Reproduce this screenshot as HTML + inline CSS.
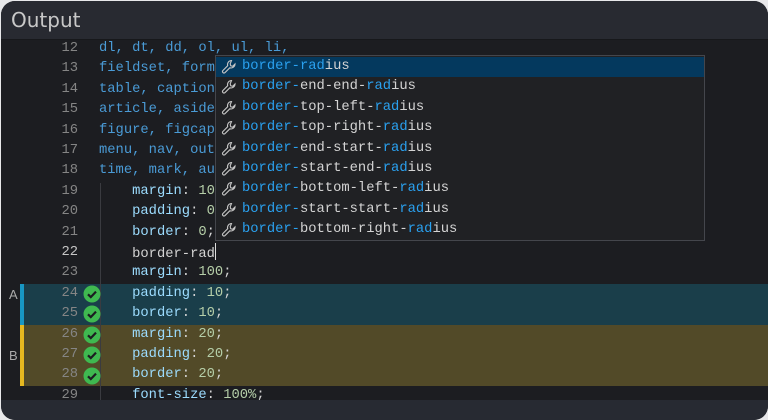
<!DOCTYPE html>
<html><head><style>
body{margin:0;background:#e8e8ea;width:768px;height:420px;overflow:hidden}
.frame{position:absolute;left:1px;top:1px;width:767px;height:419px;background:#1c1d21;border-radius:14px 14px 14px 14px;overflow:hidden}
.title{position:absolute;left:0;top:0;right:0;height:39px;background:#282a31;border-bottom:1px solid #17181b;color:#c8c8c8;font:20px "DejaVu Sans","Liberation Sans",sans-serif;line-height:38px;padding-left:10px;box-sizing:border-box}
.bottom{position:absolute;left:0;right:0;top:399px;height:21px;background:#272a32}
.line{position:absolute;left:0;right:0;height:20.4px;font:13.8px "Liberation Mono",monospace;line-height:20.4px;white-space:pre}
.num{position:absolute;right:690px;color:#858585;text-align:right}
.code{position:absolute;left:98px;color:#9cdcfe}
.sel{color:#4a9bd6}
.n{color:#b5cea8}
.p{color:#d4d4d4}
.guide{position:absolute;left:99px;top:182px;width:1px;height:220px;background:#3a3b40}
.hlA{position:absolute;left:19px;right:0;top:283px;height:41px;background:#1a3e4a;border-left:4px solid #1897c4}
.hlB{position:absolute;left:19px;right:0;top:324px;height:61px;background:#524a28;border-left:4px solid #e6b820}
.lab{position:absolute;left:8px;color:#aaa;font:13px "Liberation Sans",sans-serif}
.chk{position:absolute;left:82px;width:18px;height:18px}
.sug{position:absolute;left:214px;top:54px;width:490px;height:186px;background:#202124;border:1px solid #44464c;box-sizing:border-box}
.row{position:absolute;left:0;right:0;height:20.4px;font:13.8px "Liberation Mono",monospace;line-height:20.4px;color:#d4d4d4;white-space:pre}
.row .t{position:absolute;left:26px}
.row svg{position:absolute;left:5px;top:2px}
.b{color:#2aa1f0}
.cur{display:inline-block;width:1px;height:17px;background:#ddd;vertical-align:-3px}
</style></head><body>
<div class="frame">
<div class="title">Output</div>
<div class="hlA"></div><div class="hlB"></div>
<div class="guide"></div>
<div class="lab" style="top:286px">A</div>
<div class="lab" style="top:347px">B</div>
<div class="line" style="top:38px"><span class="num">12</span><span class="code sel">dl, dt, dd, ol, ul, li,</span></div>
<div class="line" style="top:58.4px"><span class="num">13</span><span class="code sel">fieldset, form, label, legend,</span></div>
<div class="line" style="top:78.8px"><span class="num">14</span><span class="code sel">table, caption, tbody, tfoot,</span></div>
<div class="line" style="top:99.2px"><span class="num">15</span><span class="code sel">article, aside, canvas, details,</span></div>
<div class="line" style="top:119.6px"><span class="num">16</span><span class="code sel">figure, figcaption, footer,</span></div>
<div class="line" style="top:140px"><span class="num">17</span><span class="code sel">menu, nav, output, ruby,</span></div>
<div class="line" style="top:160.4px"><span class="num">18</span><span class="code sel">time, mark, audio, video {</span></div>
<div class="line" style="top:180.8px"><span class="num">19</span><span class="code">    margin<span class="p">: </span><span class="n">10</span><span class="p">;</span></span></div>
<div class="line" style="top:201.2px"><span class="num">20</span><span class="code">    padding<span class="p">: </span><span class="n">0</span><span class="p">;</span></span></div>
<div class="line" style="top:221.6px"><span class="num">21</span><span class="code">    border<span class="p">: </span><span class="n">0</span><span class="p">;</span></span></div>
<div class="line" style="top:242px"><span class="num" style="color:#c6c6c6">22</span><span class="code" style="color:#d4d4d4">    border-rad<span class="cur"></span></span></div>
<div class="line" style="top:262.4px"><span class="num">23</span><span class="code">    margin<span class="p">: </span><span class="n">100</span><span class="p">;</span></span></div>
<div class="line" style="top:282.8px"><span class="num">24</span><span class="code">    padding<span class="p">: </span><span class="n">10</span><span class="p">;</span></span></div>
<div class="line" style="top:303.2px"><span class="num">25</span><span class="code">    border<span class="p">: </span><span class="n">10</span><span class="p">;</span></span></div>
<div class="line" style="top:323.6px"><span class="num">26</span><span class="code">    margin<span class="p">: </span><span class="n">20</span><span class="p">;</span></span></div>
<div class="line" style="top:344px"><span class="num">27</span><span class="code">    padding<span class="p">: </span><span class="n">20</span><span class="p">;</span></span></div>
<div class="line" style="top:364.4px"><span class="num">28</span><span class="code">    border<span class="p">: </span><span class="n">20</span><span class="p">;</span></span></div>
<div class="line" style="top:384.8px"><span class="num">29</span><span class="code">    font-size<span class="p">: </span><span class="n">100%</span><span class="p">;</span></span></div>
<svg class="chk" style="top:284px" viewBox="0 0 18 18"><circle cx="9" cy="9" r="8.5" fill="#3fb950"/><path d="M5 9.3l2.8 2.8L13 6.6" stroke="#1c1d21" stroke-width="2.2" fill="none"/></svg>
<svg class="chk" style="top:304px" viewBox="0 0 18 18"><circle cx="9" cy="9" r="8.5" fill="#3fb950"/><path d="M5 9.3l2.8 2.8L13 6.6" stroke="#1c1d21" stroke-width="2.2" fill="none"/></svg>
<svg class="chk" style="top:325px" viewBox="0 0 18 18"><circle cx="9" cy="9" r="8.5" fill="#3fb950"/><path d="M5 9.3l2.8 2.8L13 6.6" stroke="#1c1d21" stroke-width="2.2" fill="none"/></svg>
<svg class="chk" style="top:345px" viewBox="0 0 18 18"><circle cx="9" cy="9" r="8.5" fill="#3fb950"/><path d="M5 9.3l2.8 2.8L13 6.6" stroke="#1c1d21" stroke-width="2.2" fill="none"/></svg>
<svg class="chk" style="top:366px" viewBox="0 0 18 18"><circle cx="9" cy="9" r="8.5" fill="#3fb950"/><path d="M5 9.3l2.8 2.8L13 6.6" stroke="#1c1d21" stroke-width="2.2" fill="none"/></svg>
<div class="bottom"></div>
<div class="sug">
<div class="row" style="top:1px;background:#04395e"><svg width="16" height="16" viewBox="0 0 16 16"><path d="M10.5 1.5a4 4 0 0 0-3.8 5.2L1.8 11.6a1.5 1.5 0 0 0 2.1 2.1l4.9-4.9a4 4 0 0 0 5.2-3.8l-2.3 2.3-2-.5-.5-2z" stroke="#c5c5c5" stroke-width="1.1" fill="none"/></svg><span class="t"><span class="b">border-rad</span>ius</span></div>
<div class="row" style="top:21.4px"><svg width="16" height="16" viewBox="0 0 16 16"><path d="M10.5 1.5a4 4 0 0 0-3.8 5.2L1.8 11.6a1.5 1.5 0 0 0 2.1 2.1l4.9-4.9a4 4 0 0 0 5.2-3.8l-2.3 2.3-2-.5-.5-2z" stroke="#c5c5c5" stroke-width="1.1" fill="none"/></svg><span class="t"><span class="b">border-</span>end-end-<span class="b">rad</span>ius</span></div>
<div class="row" style="top:41.8px"><svg width="16" height="16" viewBox="0 0 16 16"><path d="M10.5 1.5a4 4 0 0 0-3.8 5.2L1.8 11.6a1.5 1.5 0 0 0 2.1 2.1l4.9-4.9a4 4 0 0 0 5.2-3.8l-2.3 2.3-2-.5-.5-2z" stroke="#c5c5c5" stroke-width="1.1" fill="none"/></svg><span class="t"><span class="b">border-</span>top-left-<span class="b">rad</span>ius</span></div>
<div class="row" style="top:62.2px"><svg width="16" height="16" viewBox="0 0 16 16"><path d="M10.5 1.5a4 4 0 0 0-3.8 5.2L1.8 11.6a1.5 1.5 0 0 0 2.1 2.1l4.9-4.9a4 4 0 0 0 5.2-3.8l-2.3 2.3-2-.5-.5-2z" stroke="#c5c5c5" stroke-width="1.1" fill="none"/></svg><span class="t"><span class="b">border-</span>top-right-<span class="b">rad</span>ius</span></div>
<div class="row" style="top:82.6px"><svg width="16" height="16" viewBox="0 0 16 16"><path d="M10.5 1.5a4 4 0 0 0-3.8 5.2L1.8 11.6a1.5 1.5 0 0 0 2.1 2.1l4.9-4.9a4 4 0 0 0 5.2-3.8l-2.3 2.3-2-.5-.5-2z" stroke="#c5c5c5" stroke-width="1.1" fill="none"/></svg><span class="t"><span class="b">border-</span>end-start-<span class="b">rad</span>ius</span></div>
<div class="row" style="top:103px"><svg width="16" height="16" viewBox="0 0 16 16"><path d="M10.5 1.5a4 4 0 0 0-3.8 5.2L1.8 11.6a1.5 1.5 0 0 0 2.1 2.1l4.9-4.9a4 4 0 0 0 5.2-3.8l-2.3 2.3-2-.5-.5-2z" stroke="#c5c5c5" stroke-width="1.1" fill="none"/></svg><span class="t"><span class="b">border-</span>start-end-<span class="b">rad</span>ius</span></div>
<div class="row" style="top:123.4px"><svg width="16" height="16" viewBox="0 0 16 16"><path d="M10.5 1.5a4 4 0 0 0-3.8 5.2L1.8 11.6a1.5 1.5 0 0 0 2.1 2.1l4.9-4.9a4 4 0 0 0 5.2-3.8l-2.3 2.3-2-.5-.5-2z" stroke="#c5c5c5" stroke-width="1.1" fill="none"/></svg><span class="t"><span class="b">border-</span>bottom-left-<span class="b">rad</span>ius</span></div>
<div class="row" style="top:143.8px"><svg width="16" height="16" viewBox="0 0 16 16"><path d="M10.5 1.5a4 4 0 0 0-3.8 5.2L1.8 11.6a1.5 1.5 0 0 0 2.1 2.1l4.9-4.9a4 4 0 0 0 5.2-3.8l-2.3 2.3-2-.5-.5-2z" stroke="#c5c5c5" stroke-width="1.1" fill="none"/></svg><span class="t"><span class="b">border-</span>start-start-<span class="b">rad</span>ius</span></div>
<div class="row" style="top:164.2px"><svg width="16" height="16" viewBox="0 0 16 16"><path d="M10.5 1.5a4 4 0 0 0-3.8 5.2L1.8 11.6a1.5 1.5 0 0 0 2.1 2.1l4.9-4.9a4 4 0 0 0 5.2-3.8l-2.3 2.3-2-.5-.5-2z" stroke="#c5c5c5" stroke-width="1.1" fill="none"/></svg><span class="t"><span class="b">border-</span>bottom-right-<span class="b">rad</span>ius</span></div>
</div>
</div>
</body></html>
